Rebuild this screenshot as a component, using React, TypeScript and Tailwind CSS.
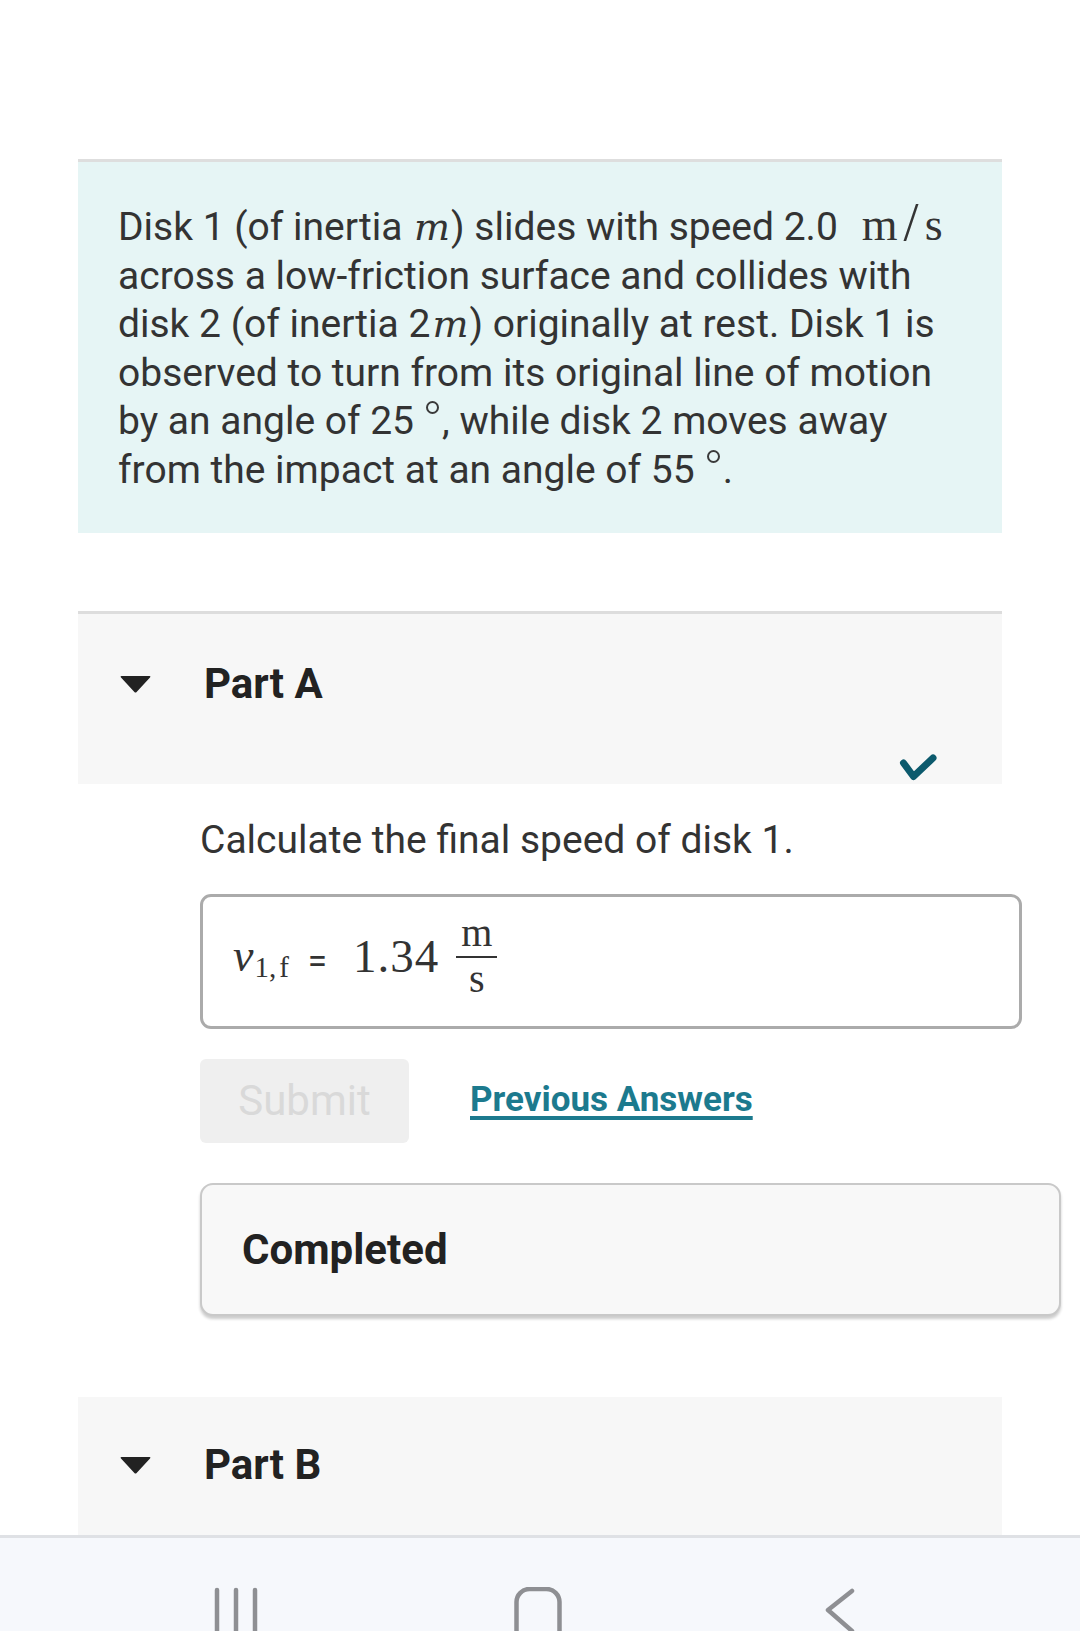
import React from "react";

function Deg() {
  return (
    <span className="inline-block w-[13px] h-[13px] rounded-full border-[2px] border-[#3a3a3a] align-[20px] ml-[12px] mr-[3px]" />
  );
}

function MathM() {
  return (
    <span className="font-['DejaVu_Serif',serif] italic text-[38px] leading-[0] ml-[2px] mr-[1px]">m</span>
  );
}

function Triangle() {
  return (
    <svg width="31" height="18" viewBox="0 0 31 18" className="shrink-0">
      <path d="M1.5 1 H29.5 Q31 1 30 2.4 L16.6 17 Q15.5 18.2 14.4 17 L1 2.4 Q0 1 1.5 1 Z" fill="#222222" />
    </svg>
  );
}

function PartHeader({ label, check, border }: { label: string; check?: boolean; border?: boolean }) {
  return (
    <div
      className={
        border
          ? "relative ml-[78px] w-[924px] h-[173px] bg-[#f7f7f7] border-t-[3px] border-[#dddddd] pt-[45px]"
          : "relative ml-[78px] w-[924px] h-[168px] bg-[#f7f7f7] pt-[43px]"
      }
    >
      <div className="flex items-center h-[50px] pl-[42px]">
        <Triangle />
        <span className="ml-[53px] text-[42px] leading-[50px] font-bold text-[#222222]">{label}</span>
      </div>
      {check && (
        <svg width="40" height="31" viewBox="0 0 40 31" className="absolute left-[820px] top-[137px]">
          <polyline
            points="5.5,12 15.5,25.5 35,7"
            fill="none"
            stroke="#0c5a6d"
            strokeWidth="7"
            strokeLinecap="round"
            strokeLinejoin="round"
          />
        </svg>
      )}
    </div>
  );
}

export default function App() {
  return (
    <div className="w-[1080px] h-[1631px] flex flex-col bg-white overflow-hidden font-['Roboto',sans-serif] text-[#333333]">
      <div className="flex-1 overflow-hidden pt-[159px]">
        {/* Problem statement */}
        <div className="ml-[78px] w-[924px] border-t-[3px] border-[#dedede] bg-[#e6f5f5] pl-[40px] pt-[41px] pb-[38px] text-[39px] leading-[48.6px] text-[#333333] whitespace-nowrap">
          <span>
            Disk 1 (of inertia <MathM />) slides with speed 2.0
            <span className="ml-[24px] font-['Liberation_Serif',serif] text-[46px] leading-[0]">
              m<span className="text-[54px] leading-[0] mx-[6px]">/</span>s
            </span>
          </span>
          <br />
          <span>across a low-friction surface and collides with</span>
          <br />
          <span>
            disk 2 (of inertia 2<MathM />) originally at rest. Disk 1 is
          </span>
          <br />
          <span>observed to turn from its original line of motion</span>
          <br />
          <span>
            by an angle of 25
            <Deg />, while disk 2 moves away
          </span>
          <br />
          <span>
            from the impact at an angle of 55
            <Deg />.
          </span>
        </div>

        {/* Part A */}
        <div className="mt-[78px]">
          <PartHeader label="Part A" check border />
          <div className="pl-[200px]">
            <p className="mt-[32px] text-[39px] leading-[48px] text-[#333333]">Calculate the final speed of disk 1.</p>

            <div className="mt-[30px] w-[822px] h-[135px] rounded-[11px] border-[3px] border-[#ababab] bg-white flex items-center pl-[30px]">
              <div className="flex items-center text-[#333333]">
                <span className="font-['Liberation_Serif',serif] italic text-[46px] leading-none mb-[10px]">v</span>
                <span className="font-['Liberation_Serif',serif] text-[29px] leading-none mt-[12px] ml-[1px]">
                  1,<span className="ml-[3px]">f</span>
                </span>
                <span className="ml-[19px] text-[35px] leading-none">=</span>
                <span className="ml-[26px] font-['Liberation_Serif',serif] text-[47px] leading-none tracking-[1px] mb-[10px]">
                  1.34
                </span>
                <span className="ml-[17px] inline-flex flex-col items-center font-['Liberation_Serif',serif] text-[40px] leading-none">
                  <span className="px-[2px] pb-[3px]">m</span>
                  <span className="w-[41px] h-[2px] bg-[#333333]" />
                  <span className="pt-[1px] pb-[10px]">s</span>
                </span>
              </div>
            </div>

            <div className="mt-[30px] flex items-center">
              <div className="w-[209px] h-[84px] rounded-[6px] bg-[#efefef] flex items-center justify-center text-[42px] text-[#d9d9d9]">
                Submit
              </div>
              <span className="ml-[61px] text-[35px] font-bold text-[#1c7a8e] underline decoration-[4px] underline-offset-[5px]">
                Previous Answers
              </span>
            </div>

            <div className="mt-[40px] w-[861px] h-[133px] rounded-[13px] border-[2px] border-[#c9c9c9] bg-[#f8f8f8] shadow-[0_3px_3px_rgba(0,0,0,0.2)] flex items-center pl-[40px]">
              <span className="text-[42px] font-bold text-[#222222]">Completed</span>
            </div>
          </div>
        </div>

        {/* Part B */}
        <div className="mt-[81px]">
          <PartHeader label="Part B" />
        </div>
      </div>

      {/* Android navigation bar */}
      <div className="h-[96px] shrink-0 border-t-[3px] border-[#dfe1e5] bg-[#f6f8fc] overflow-hidden">
        <div className="ml-[85px] w-[906px] grid grid-cols-3 pt-[49px]">
          <div className="flex justify-center">
            <svg width="44" height="50" viewBox="0 0 44 50">
              <g stroke="#8e8f93" strokeWidth="4.5" strokeLinecap="round">
                <line x1="3" y1="3" x2="3" y2="60" />
                <line x1="22" y1="3" x2="22" y2="60" />
                <line x1="41" y1="3" x2="41" y2="60" />
              </g>
            </svg>
          </div>
          <div className="flex justify-center">
            <svg width="48" height="50" viewBox="0 0 48 50">
              <rect x="2.5" y="2" width="43" height="60" rx="13" fill="none" stroke="#8e8f93" strokeWidth="4.5" />
            </svg>
          </div>
          <div className="flex justify-center">
            <svg width="30" height="50" viewBox="0 0 30 50">
              <polyline points="27,4 3,23 27,44" fill="none" stroke="#8e8f93" strokeWidth="4.5" strokeLinecap="round" strokeLinejoin="round" />
            </svg>
          </div>
        </div>
      </div>
    </div>
  );
}
